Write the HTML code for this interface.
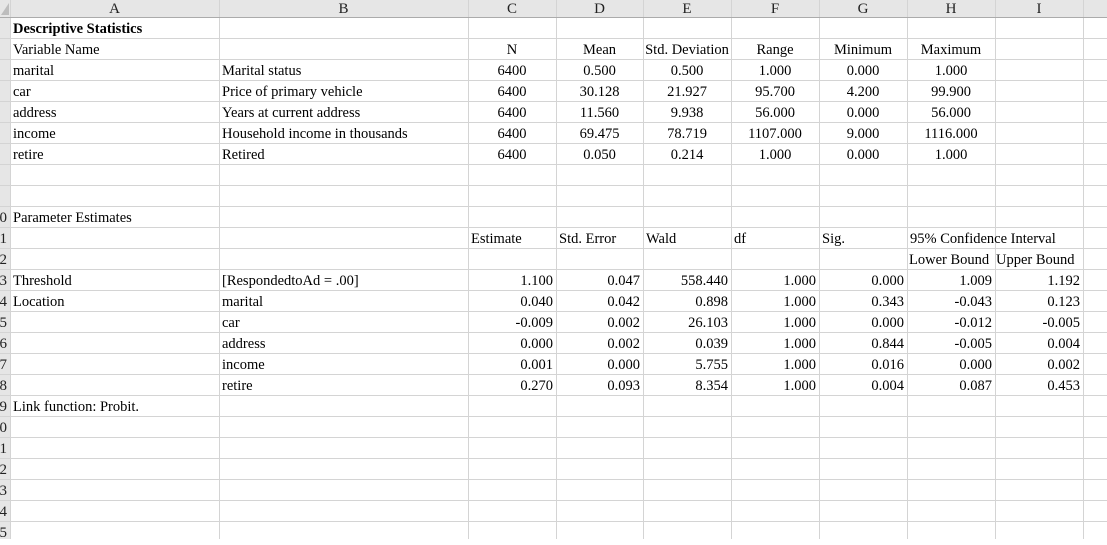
<!DOCTYPE html>
<html><head><meta charset="utf-8"><style>
body{margin:0;width:1107px;height:539px;overflow:hidden;background:#fff;position:relative;font-family:"Liberation Serif",serif;font-size:14.5px;color:#000}
.v{position:absolute;top:0;width:1px;height:539px;background:#d4d4d4}
.h{position:absolute;left:0;height:1px;width:1107px;background:#d4d4d4}
.t{position:absolute;height:21px;line-height:24px;white-space:nowrap;padding:0 3px;box-sizing:border-box}
.r{text-align:right}.c{text-align:center}
.hd{position:absolute;top:0;height:17px;line-height:18px;text-align:center;font-size:15px;color:#222}
.rn{position:absolute;left:-7px;width:14px;text-align:right;height:21px;line-height:24px;font-size:15px;color:#222}
</style></head><body>
<div style="position:absolute;left:0;top:0;width:1107px;height:17px;background:#e6e6e6"></div>
<div style="position:absolute;left:0;top:17px;width:10px;height:522px;background:#e6e6e6"></div>
<div style="position:absolute;left:1px;top:3px;width:0;height:0;border-left:8px solid transparent;border-bottom:12px solid #bdbdbd"></div>
<div class="v" style="left:10px"></div><div class="v" style="left:219px"></div><div class="v" style="left:468px"></div><div class="v" style="left:556px"></div><div class="v" style="left:643px"></div><div class="v" style="left:731px"></div><div class="v" style="left:819px"></div><div class="v" style="left:907px"></div><div class="v" style="left:995px"></div><div class="v" style="left:1083px"></div>
<div class="h" style="top:17px;background:#ababab"></div>
<div class="h" style="top:38px"></div><div class="h" style="top:59px"></div><div class="h" style="top:80px"></div><div class="h" style="top:101px"></div><div class="h" style="top:122px"></div><div class="h" style="top:143px"></div><div class="h" style="top:164px"></div><div class="h" style="top:185px"></div><div class="h" style="top:206px"></div><div class="h" style="top:227px"></div><div class="h" style="top:248px"></div><div class="h" style="top:269px"></div><div class="h" style="top:290px"></div><div class="h" style="top:311px"></div><div class="h" style="top:332px"></div><div class="h" style="top:353px"></div><div class="h" style="top:374px"></div><div class="h" style="top:395px"></div><div class="h" style="top:416px"></div><div class="h" style="top:437px"></div><div class="h" style="top:458px"></div><div class="h" style="top:479px"></div><div class="h" style="top:500px"></div><div class="h" style="top:521px"></div>

<div class="hd" style="left:10px;width:209px">A</div><div class="hd" style="left:219px;width:249px">B</div><div class="hd" style="left:468px;width:88px">C</div><div class="hd" style="left:556px;width:87px">D</div><div class="hd" style="left:643px;width:88px">E</div><div class="hd" style="left:731px;width:88px">F</div><div class="hd" style="left:819px;width:88px">G</div><div class="hd" style="left:907px;width:88px">H</div><div class="hd" style="left:995px;width:88px">I</div>

<div class="rn" style="top:206px">0</div><div class="rn" style="top:227px">1</div><div class="rn" style="top:248px">2</div><div class="rn" style="top:269px">3</div><div class="rn" style="top:290px">4</div><div class="rn" style="top:311px">5</div><div class="rn" style="top:332px">6</div><div class="rn" style="top:353px">7</div><div class="rn" style="top:374px">8</div><div class="rn" style="top:395px">9</div><div class="rn" style="top:416px">0</div><div class="rn" style="top:437px">1</div><div class="rn" style="top:458px">2</div><div class="rn" style="top:479px">3</div><div class="rn" style="top:500px">4</div><div class="rn" style="top:521px">5</div>

<div class="t" style="left:10px;top:17px;font-weight:bold">Descriptive Statistics</div>
<div class="t" style="left:10px;top:38px">Variable Name</div>
<div class="t c" style="left:468px;width:88px;top:38px">N</div><div class="t c" style="left:556px;width:87px;top:38px">Mean</div><div class="t c" style="left:643px;width:88px;top:38px;padding:0">Std. Deviation</div><div class="t c" style="left:731px;width:88px;top:38px">Range</div><div class="t c" style="left:819px;width:88px;top:38px">Minimum</div><div class="t c" style="left:907px;width:88px;top:38px">Maximum</div>

<div class="t" style="left:10px;top:59px">marital</div><div class="t" style="left:219px;top:59px">Marital status</div>
<div class="t c" style="left:468px;width:88px;top:59px">6400</div><div class="t c" style="left:556px;width:87px;top:59px">0.500</div><div class="t c" style="left:643px;width:88px;top:59px">0.500</div><div class="t c" style="left:731px;width:88px;top:59px">1.000</div><div class="t c" style="left:819px;width:88px;top:59px">0.000</div><div class="t c" style="left:907px;width:88px;top:59px">1.000</div>

<div class="t" style="left:10px;top:80px">car</div><div class="t" style="left:219px;top:80px">Price of primary vehicle</div>
<div class="t c" style="left:468px;width:88px;top:80px">6400</div><div class="t c" style="left:556px;width:87px;top:80px">30.128</div><div class="t c" style="left:643px;width:88px;top:80px">21.927</div><div class="t c" style="left:731px;width:88px;top:80px">95.700</div><div class="t c" style="left:819px;width:88px;top:80px">4.200</div><div class="t c" style="left:907px;width:88px;top:80px">99.900</div>

<div class="t" style="left:10px;top:101px">address</div><div class="t" style="left:219px;top:101px">Years at current address</div>
<div class="t c" style="left:468px;width:88px;top:101px">6400</div><div class="t c" style="left:556px;width:87px;top:101px">11.560</div><div class="t c" style="left:643px;width:88px;top:101px">9.938</div><div class="t c" style="left:731px;width:88px;top:101px">56.000</div><div class="t c" style="left:819px;width:88px;top:101px">0.000</div><div class="t c" style="left:907px;width:88px;top:101px">56.000</div>

<div class="t" style="left:10px;top:122px">income</div><div class="t" style="left:219px;top:122px">Household income in thousands</div>
<div class="t c" style="left:468px;width:88px;top:122px">6400</div><div class="t c" style="left:556px;width:87px;top:122px">69.475</div><div class="t c" style="left:643px;width:88px;top:122px">78.719</div><div class="t c" style="left:731px;width:88px;top:122px">1107.000</div><div class="t c" style="left:819px;width:88px;top:122px">9.000</div><div class="t c" style="left:907px;width:88px;top:122px">1116.000</div>

<div class="t" style="left:10px;top:143px">retire</div><div class="t" style="left:219px;top:143px">Retired</div>
<div class="t c" style="left:468px;width:88px;top:143px">6400</div><div class="t c" style="left:556px;width:87px;top:143px">0.050</div><div class="t c" style="left:643px;width:88px;top:143px">0.214</div><div class="t c" style="left:731px;width:88px;top:143px">1.000</div><div class="t c" style="left:819px;width:88px;top:143px">0.000</div><div class="t c" style="left:907px;width:88px;top:143px">1.000</div>

<div class="t" style="left:10px;top:206px">Parameter Estimates</div>
<div class="t" style="left:468px;top:227px">Estimate</div><div class="t" style="left:556px;top:227px">Std. Error</div><div class="t" style="left:643px;top:227px">Wald</div><div class="t" style="left:731px;top:227px">df</div><div class="t" style="left:819px;top:227px">Sig.</div><div class="t" style="left:907px;top:227px">95% Confidence Interval</div>
<div class="t" style="left:907px;top:248px;padding-left:2px">Lower Bound</div><div class="t" style="left:995px;top:248px;padding-left:1px">Upper Bound</div>

<div class="t" style="left:10px;top:269px">Threshold</div><div class="t" style="left:219px;top:269px">[RespondedtoAd = .00]</div>
<div class="t" style="left:10px;top:290px">Location</div><div class="t" style="left:219px;top:290px">marital</div>
<div class="t" style="left:219px;top:311px">car</div><div class="t" style="left:219px;top:332px">address</div><div class="t" style="left:219px;top:353px">income</div><div class="t" style="left:219px;top:374px">retire</div>
<div class="t" style="left:10px;top:395px">Link function: Probit.</div>

<div class="t r" style="left:468px;width:88px;top:269px">1.100</div><div class="t r" style="left:556px;width:87px;top:269px">0.047</div><div class="t r" style="left:643px;width:88px;top:269px">558.440</div><div class="t r" style="left:731px;width:88px;top:269px">1.000</div><div class="t r" style="left:819px;width:88px;top:269px">0.000</div><div class="t r" style="left:907px;width:88px;top:269px">1.009</div><div class="t r" style="left:995px;width:88px;top:269px">1.192</div>
<div class="t r" style="left:468px;width:88px;top:290px">0.040</div><div class="t r" style="left:556px;width:87px;top:290px">0.042</div><div class="t r" style="left:643px;width:88px;top:290px">0.898</div><div class="t r" style="left:731px;width:88px;top:290px">1.000</div><div class="t r" style="left:819px;width:88px;top:290px">0.343</div><div class="t r" style="left:907px;width:88px;top:290px">-0.043</div><div class="t r" style="left:995px;width:88px;top:290px">0.123</div>
<div class="t r" style="left:468px;width:88px;top:311px">-0.009</div><div class="t r" style="left:556px;width:87px;top:311px">0.002</div><div class="t r" style="left:643px;width:88px;top:311px">26.103</div><div class="t r" style="left:731px;width:88px;top:311px">1.000</div><div class="t r" style="left:819px;width:88px;top:311px">0.000</div><div class="t r" style="left:907px;width:88px;top:311px">-0.012</div><div class="t r" style="left:995px;width:88px;top:311px">-0.005</div>
<div class="t r" style="left:468px;width:88px;top:332px">0.000</div><div class="t r" style="left:556px;width:87px;top:332px">0.002</div><div class="t r" style="left:643px;width:88px;top:332px">0.039</div><div class="t r" style="left:731px;width:88px;top:332px">1.000</div><div class="t r" style="left:819px;width:88px;top:332px">0.844</div><div class="t r" style="left:907px;width:88px;top:332px">-0.005</div><div class="t r" style="left:995px;width:88px;top:332px">0.004</div>
<div class="t r" style="left:468px;width:88px;top:353px">0.001</div><div class="t r" style="left:556px;width:87px;top:353px">0.000</div><div class="t r" style="left:643px;width:88px;top:353px">5.755</div><div class="t r" style="left:731px;width:88px;top:353px">1.000</div><div class="t r" style="left:819px;width:88px;top:353px">0.016</div><div class="t r" style="left:907px;width:88px;top:353px">0.000</div><div class="t r" style="left:995px;width:88px;top:353px">0.002</div>
<div class="t r" style="left:468px;width:88px;top:374px">0.270</div><div class="t r" style="left:556px;width:87px;top:374px">0.093</div><div class="t r" style="left:643px;width:88px;top:374px">8.354</div><div class="t r" style="left:731px;width:88px;top:374px">1.000</div><div class="t r" style="left:819px;width:88px;top:374px">0.004</div><div class="t r" style="left:907px;width:88px;top:374px">0.087</div><div class="t r" style="left:995px;width:88px;top:374px">0.453</div>
</body></html>
